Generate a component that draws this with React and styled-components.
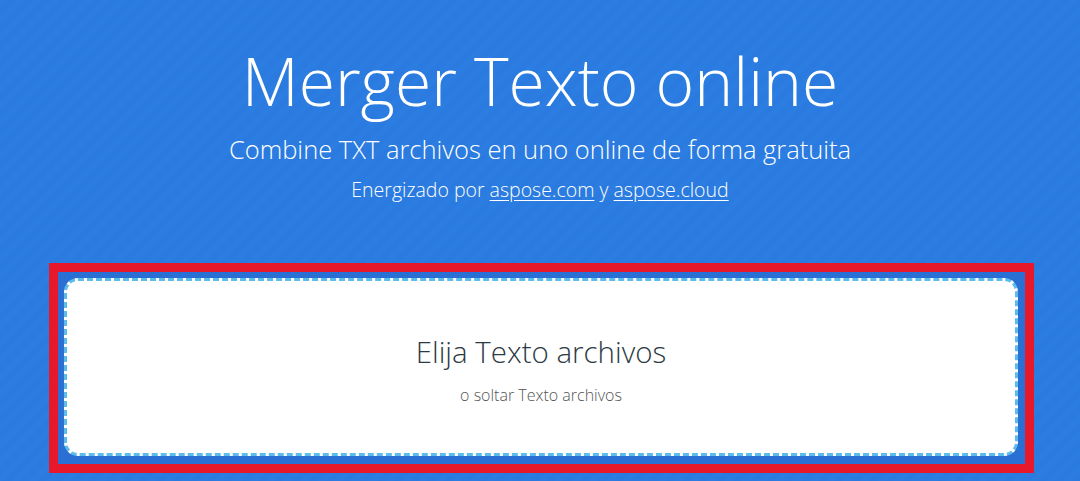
import styled, { createGlobalStyle } from "styled-components";

const GlobalStyle = createGlobalStyle`
  html, body {
    margin: 0;
    padding: 0;
    background: #2b7de1;
  }
  body {
    font-family: "Open Sans", "Noto Sans", sans-serif;
    color: #fff;
  }
`;

const Page = styled.div`
  width: 1080px;
  height: 481px;
  overflow: hidden;
  background: repeating-linear-gradient(
    135deg,
    #2b7de1 0px,
    #2b7de1 6px,
    #2a7adf 6px,
    #2a7adf 12px
  );
  display: flex;
  flex-direction: column;
  align-items: center;
`;

const Header = styled.header`
  display: flex;
  flex-direction: column;
  align-items: center;
  padding-top: 47px;
`;

const Title = styled.h1`
  margin: 0;
  font-size: 66px;
  font-weight: 300;
  line-height: 1;
`;

const Subtitle = styled.h2`
  margin: 21px 0 0;
  font-size: 25.5px;
  font-weight: 300;
  line-height: 1.2;
`;

const Powered = styled.p`
  margin: 13px 0 0;
  font-size: 19.5px;
  font-weight: 300;
  line-height: 1.2;

  a {
    color: #fff;
    text-decoration: underline;
    text-underline-offset: 3px;
  }
`;

const Frame = styled.div`
  box-sizing: border-box;
  margin-top: 62px;
  margin-left: 3px;
  width: 985px;
  border: 9px solid #e8182b;
  background: #2a6fd3;
  padding: 6px 7px 8px 6px;
`;

const Dropzone = styled.div`
  height: 172px;
  background: #fff;
  border: 3px dashed #5cbcec;
  border-radius: 14px;
  display: flex;
  flex-direction: column;
  align-items: center;
  justify-content: center;
  cursor: pointer;
`;

const DropTitle = styled.div`
  font-size: 29.5px;
  font-weight: 300;
  color: #2c3a44;
  margin-top: 4px;
`;

const DropHint = styled.div`
  margin-top: 12px;
  font-size: 16px;
  font-weight: 300;
  color: #555;
`;

export default function App() {
  return (
    <Page>
      <GlobalStyle />
      <Header>
        <Title>Merger Texto online</Title>
        <Subtitle>Combine TXT archivos en uno online de forma gratuita</Subtitle>
        <Powered>
          Energizado por <a href="#">aspose.com</a> y <a href="#">aspose.cloud</a>
        </Powered>
      </Header>
      <Frame>
        <Dropzone>
          <DropTitle>Elija Texto archivos</DropTitle>
          <DropHint>o soltar Texto archivos</DropHint>
        </Dropzone>
      </Frame>
    </Page>
  );
}
